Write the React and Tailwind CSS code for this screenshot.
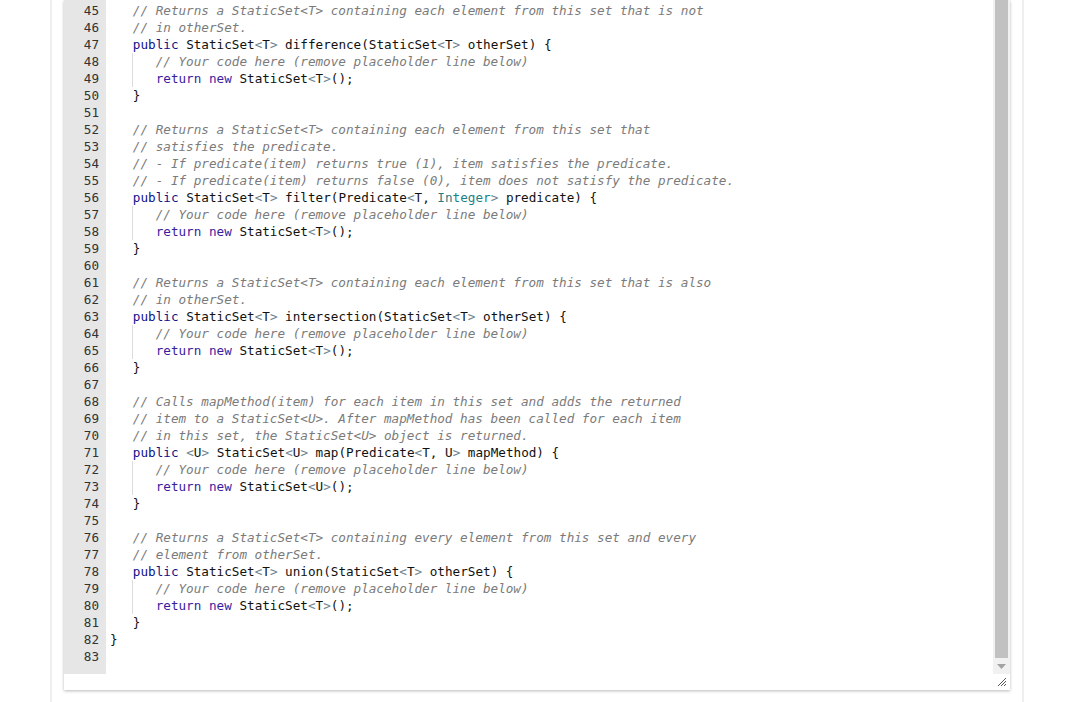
import React from "react";

const LINES = [
  [45, "   // Returns a StaticSet<T> containing each element from this set that is not"],
  [46, "   // in otherSet."],
  [47, "   public StaticSet<T> difference(StaticSet<T> otherSet) {"],
  [48, "      // Your code here (remove placeholder line below)"],
  [49, "      return new StaticSet<T>();"],
  [50, "   }"],
  [51, ""],
  [52, "   // Returns a StaticSet<T> containing each element from this set that"],
  [53, "   // satisfies the predicate."],
  [54, "   // - If predicate(item) returns true (1), item satisfies the predicate."],
  [55, "   // - If predicate(item) returns false (0), item does not satisfy the predicate."],
  [56, "   public StaticSet<T> filter(Predicate<T, Integer> predicate) {"],
  [57, "      // Your code here (remove placeholder line below)"],
  [58, "      return new StaticSet<T>();"],
  [59, "   }"],
  [60, ""],
  [61, "   // Returns a StaticSet<T> containing each element from this set that is also"],
  [62, "   // in otherSet."],
  [63, "   public StaticSet<T> intersection(StaticSet<T> otherSet) {"],
  [64, "      // Your code here (remove placeholder line below)"],
  [65, "      return new StaticSet<T>();"],
  [66, "   }"],
  [67, ""],
  [68, "   // Calls mapMethod(item) for each item in this set and adds the returned"],
  [69, "   // item to a StaticSet<U>. After mapMethod has been called for each item"],
  [70, "   // in this set, the StaticSet<U> object is returned."],
  [71, "   public <U> StaticSet<U> map(Predicate<T, U> mapMethod) {"],
  [72, "      // Your code here (remove placeholder line below)"],
  [73, "      return new StaticSet<U>();"],
  [74, "   }"],
  [75, ""],
  [76, "   // Returns a StaticSet<T> containing every element from this set and every"],
  [77, "   // element from otherSet."],
  [78, "   public StaticSet<T> union(StaticSet<T> otherSet) {"],
  [79, "      // Your code here (remove placeholder line below)"],
  [80, "      return new StaticSet<T>();"],
  [81, "   }"],
  [82, "}"],
  [83, ""],
];

function tokenize(text) {
  const trimmed = text.trimStart();
  const lead = text.length - trimmed.length;
  if (trimmed.startsWith("//")) {
    return [
      <span key="ws">{text.slice(0, lead)}</span>,
      <span key="c" className="italic text-[#7b7b7b]">{trimmed}</span>,
    ];
  }
  const parts = text.split(/(\bpublic\b|\breturn\b|\bnew\b|\bInteger\b|[<>])/);
  return parts.map((p, i) => {
    if (p === "public") return <span key={i} className="text-[#10108a]">{p}</span>;
    if (p === "return" || p === "new") return <span key={i} className="text-[#3a1c9e]">{p}</span>;
    if (p === "Integer") return <span key={i} className="text-[#1f7f86]">{p}</span>;
    if (p === "<" || p === ">") return <span key={i} className="text-[#6f8490]">{p}</span>;
    return <span key={i}>{p}</span>;
  });
}

export default function App() {
  return (
    <div className="min-h-[702px] bg-white">
      <div className="ml-[50px] w-[974px] min-h-[702px] border-l-[2px] border-r-[2px] border-[#efefef] pl-[12px] pr-[12px]">
        <div className="w-[946px] bg-white shadow-[0_1px_3px_rgba(0,0,0,0.28)]">
          <div className="flex h-[674px] overflow-hidden">
            <div
              className="w-[42px] shrink-0 bg-[#e6e6e6] pt-[2px] text-right pr-[7px] text-[#333] text-[12.65px] leading-[17px]"
              style={{ fontFamily: '"DejaVu Sans Mono", "Liberation Mono", monospace' }}
            >
              {LINES.map(([n]) => (
                <div key={n} className="h-[17px]">{n}</div>
              ))}
            </div>
            <div
              className="flex-1 pl-[4px] pt-[2px] text-[12.65px] leading-[17px] text-[#111]"
              style={{ fontFamily: '"DejaVu Sans Mono", "Liberation Mono", monospace' }}
            >
              {LINES.map(([n, text]) => {
                const lead = text.length - text.trimStart().length;
                return (
                  <div key={n} className="relative h-[17px] whitespace-pre">
                    {lead >= 6 && text.trim() !== "" && (
                      <span className="absolute left-[22px] top-0 h-[17px] w-px bg-[#dcdcdc]" />
                    )}
                    {tokenize(text)}
                  </div>
                );
              })}
            </div>
            <div className="w-[17px] shrink-0 bg-[#f1f1f1] flex flex-col">
              <div className="mx-[2px] h-[658px] bg-[#c1c1c1]" />
              <div className="flex flex-1 items-center justify-center">
                <svg width="9" height="5" viewBox="0 0 9 5">
                  <path d="M0 0 H9 L4.5 5 Z" fill="#a3a3a3" />
                </svg>
              </div>
            </div>
          </div>
          <div className="flex h-[16px] justify-end items-end">
            <div className="w-[17px] h-[16px] flex items-end justify-end pr-[3px] pb-[3px]">
              <svg width="10" height="10" viewBox="0 0 10 10">
                <path d="M9 1 L1 9 M9 4 L4 9 M9 7 L7 9" stroke="#555" strokeWidth="1" />
              </svg>
            </div>
          </div>
        </div>
      </div>
    </div>
  );
}
